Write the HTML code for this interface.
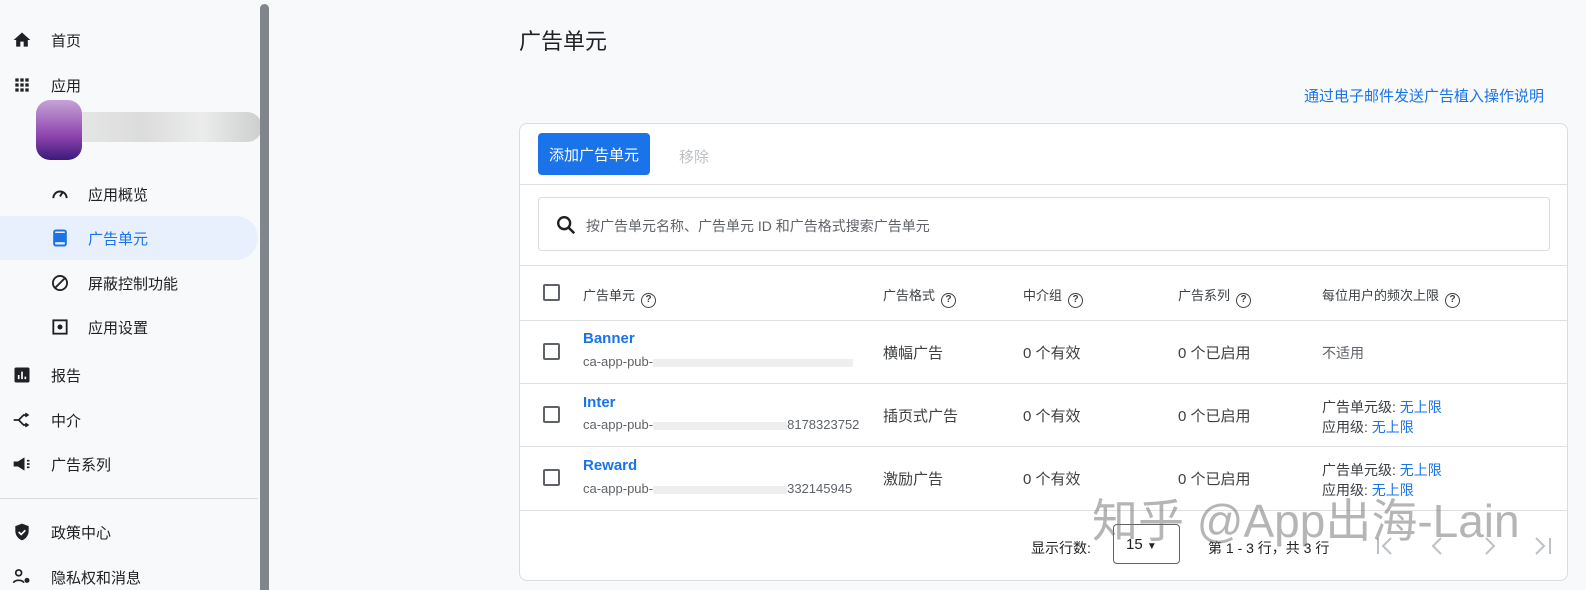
<!DOCTYPE html>
<html><head><meta charset="utf-8"><style>
*{box-sizing:border-box;margin:0;padding:0}
html,body{width:1586px;height:590px;overflow:hidden}
body{background:#f8f9fa;font-family:"Liberation Sans","Noto Sans CJK SC",sans-serif;color:#3c4043;position:relative}
.side{position:absolute;left:0;top:0;width:258px;height:590px}
.it{position:absolute;left:0;width:258px;height:44px;font-size:15px;color:#202124;white-space:nowrap}
.it .ic{position:absolute;left:12px;top:12px;width:20px;height:20px}
.it span{position:absolute;left:51px;top:12px;white-space:nowrap}
.sub .ic{left:50px}.sub span{left:88px}
.sel{background:#e8f0fe;border-radius:0 22px 22px 0;color:#1a73e8}
.scroll{position:absolute;left:260px;top:4px;width:9px;height:590px;background:#80868b;border-radius:5px}
h1{position:absolute;left:519px;top:24px;font-size:22px;font-weight:400;color:#202124}
.mail{position:absolute;left:1304px;top:85px;font-size:15px;color:#1a73e8;white-space:nowrap}
.card{position:absolute;left:519px;top:123px;width:1049px;height:458px;background:#fff;border:1px solid #dadce0;border-radius:8px}
.btn{position:absolute;left:18px;top:9px;width:112px;height:42px;background:#1a73e8;color:#fff;border-radius:4px;font-size:15px;display:flex;align-items:center;justify-content:center}
.rm{position:absolute;left:159px;top:22px;font-size:15px;color:#bdc1c6}
.hl{position:absolute;left:0;right:0;height:1px;background:#e0e0e0}
.search{position:absolute;left:18px;top:73px;width:1012px;height:54px;border:1px solid #dadce0;border-radius:4px}
.search span{position:absolute;left:47px;top:18px;font-size:14px;color:#5f6368;white-space:nowrap}
.t{position:absolute;font-size:13px;color:#3c4043;white-space:nowrap}
.c{font-size:15px;color:#3c4043}
.cb{position:absolute;left:23px;width:17px;height:17px;border:2px solid #5f6368;border-radius:2px}
.q{display:inline-block;width:15px;height:15px;border:1.6px solid #3c4043;border-radius:50%;font-size:10px;text-align:center;line-height:12px;font-weight:bold;margin-left:6px;vertical-align:-2px}
.lnk{color:#1a73e8;font-size:15px;font-weight:bold}
.b{color:#1a73e8}
.wm{position:absolute;left:1092px;top:485px;font-size:46px;color:rgba(120,120,120,.55);white-space:nowrap}
.pg{position:absolute;top:410px;font-size:24px;color:#bdc1c6}
</style></head><body>
<div class="side">
<div class="it" style="top:18px"><svg class="ic" viewBox="0 0 24 24"><path d="M10 20v-6h4v6h5v-8h3L12 3 2 12h3v8z" fill="#202124"/></svg><span>首页</span></div>
<div class="it" style="top:63px"><svg class="ic" viewBox="0 0 24 24" fill="#202124"><path d="M4 4h4v4H4zM10 4h4v4h-4zM16 4h4v4h-4zM4 10h4v4H4zM10 10h4v4h-4zM16 10h4v4h-4zM4 16h4v4H4zM10 16h4v4h-4zM16 16h4v4h-4z"/></svg><span>应用</span></div>
<div style="position:absolute;left:36px;top:100px;width:46px;height:60px;border-radius:14px;background:linear-gradient(#c5a3d8,#8e44ad 60%,#3a1a7a)"></div>
<div style="position:absolute;left:82px;top:112px;width:180px;height:30px;background:linear-gradient(90deg,#ddd,#cfcfcf,#e6e6e6,#bbb);border-radius:0 15px 15px 0;opacity:.7"></div>
<div class="it sub" style="top:172px"><svg class="ic" viewBox="0 0 24 24"><path d="M4 17a8 8 0 1116 0" fill="none" stroke="#202124" stroke-width="2.4"/><path d="M12 15l3-5" stroke="#202124" stroke-width="2.4"/></svg><span>应用概览</span></div>
<div class="it sub sel" style="top:216px"><svg class="ic" viewBox="0 0 24 24"><rect x="5" y="3" width="14" height="18" rx="2" fill="none" stroke="#1a73e8" stroke-width="2.4"/><rect x="6" y="6" width="12" height="11" fill="#1a73e8"/></svg><span>广告单元</span></div>
<div class="it sub" style="top:261px"><svg class="ic" viewBox="0 0 24 24"><circle cx="12" cy="12" r="8.5" fill="none" stroke="#202124" stroke-width="2.2"/><path d="M6 18L18 6" stroke="#202124" stroke-width="2.2"/></svg><span>屏蔽控制功能</span></div>
<div class="it sub" style="top:305px"><svg class="ic" viewBox="0 0 24 24"><rect x="4" y="4" width="16" height="16" fill="none" stroke="#202124" stroke-width="2.2"/><circle cx="12" cy="12" r="3" fill="#202124"/></svg><span>应用设置</span></div>
<div class="it" style="top:353px"><svg class="ic" viewBox="0 0 24 24"><rect x="3" y="3" width="18" height="18" rx="2" fill="#202124"/><path d="M8 17v-5M12 17V8M16 17v-3" stroke="#fff" stroke-width="2"/></svg><span>报告</span></div>
<div class="it" style="top:398px"><svg class="ic" viewBox="0 0 24 24"><path d="M2 12h6l6-6h4M8 12l6 6h4M16 4l3 2-3 2M16 16l3 2-3 2" fill="none" stroke="#202124" stroke-width="2"/></svg><span>中介</span></div>
<div class="it" style="top:442px"><svg class="ic" viewBox="0 0 24 24"><path d="M2 9h5l8-5v16l-8-5H2z" fill="#202124"/><path d="M18 8h3M18 12h3M18 16h3" stroke="#202124" stroke-width="2"/></svg><span>广告系列</span></div>
<div style="position:absolute;left:0;top:498px;width:258px;height:1px;background:#dadce0"></div>
<div class="it" style="top:510px"><svg class="ic" viewBox="0 0 24 24"><path d="M12 2l8 3v6c0 5-3.5 9.5-8 11-4.5-1.5-8-6-8-11V5z" fill="#202124"/><path d="M8 12l3 3 5-5" fill="none" stroke="#fff" stroke-width="2"/></svg><span>政策中心</span></div>
<div class="it" style="top:555px"><svg class="ic" viewBox="0 0 24 24"><circle cx="8" cy="7" r="3.5" fill="none" stroke="#202124" stroke-width="2"/><path d="M2 19c0-4 12-4 12 0" fill="none" stroke="#202124" stroke-width="2"/><circle cx="18" cy="16" r="3" fill="#202124"/></svg><span>隐私权和消息</span></div>
</div>
<div class="scroll"></div>
<h1>广告单元</h1>
<div class="mail">通过电子邮件发送广告植入操作说明</div>
<div class="card">
<div class="btn">添加广告单元</div><div class="rm">移除</div>
<div class="hl" style="top:60px"></div>
<div class="search"><svg style="position:absolute;left:16px;top:16px" width="22" height="22" viewBox="0 0 24 24"><circle cx="10" cy="10" r="6.5" fill="none" stroke="#202124" stroke-width="2.6"/><path d="M15 15l6 6" stroke="#202124" stroke-width="2.8"/></svg><span>按广告单元名称、广告单元 ID 和广告格式搜索广告单元</span></div>
<div class="hl" style="top:141px"></div>
<div class="cb" style="top:160px"></div>
<div class="t" style="left:63px;top:161px">广告单元<span class="q">?</span></div>
<div class="t" style="left:363px;top:161px">广告格式<span class="q">?</span></div>
<div class="t" style="left:503px;top:161px">中介组<span class="q">?</span></div>
<div class="t" style="left:658px;top:161px">广告系列<span class="q">?</span></div>
<div class="t" style="left:802px;top:161px">每位用户的频次上限<span class="q">?</span></div>
<div class="hl" style="top:196px"></div>
<div class="cb" style="top:219px"></div>
<div class="t lnk" style="left:63px;top:206px">Banner</div>
<div class="t" style="left:63px;top:230px;color:#5f6368">ca-app-pub-<span style="display:inline-block;width:200px;height:8px;background:#eee;vertical-align:middle"></span></div>
<div class="t c" style="left:363px;top:218px">横幅广告</div><div class="t c" style="left:503px;top:218px">0 个有效</div><div class="t c" style="left:658px;top:218px">0 个已启用</div><div class="t" style="left:802px;top:219px;font-size:14px;color:#5f6368">不适用</div>
<div class="hl" style="top:259px"></div>
<div class="cb" style="top:282px"></div>
<div class="t lnk" style="left:63px;top:270px">Inter</div>
<div class="t" style="left:63px;top:293px;color:#5f6368">ca-app-pub-<span style="display:inline-block;width:134px;height:8px;background:#eee;vertical-align:middle"></span>8178323752</div>
<div class="t c" style="left:363px;top:281px">插页式广告</div><div class="t c" style="left:503px;top:281px">0 个有效</div><div class="t c" style="left:658px;top:281px">0 个已启用</div>
<div class="t" style="left:802px;top:273px;font-size:14px">广告单元级: <span class="b">无上限</span><br>应用级: <span class="b">无上限</span></div>
<div class="hl" style="top:322px"></div>
<div class="cb" style="top:345px"></div>
<div class="t lnk" style="left:63px;top:333px">Reward</div>
<div class="t" style="left:63px;top:357px;color:#5f6368">ca-app-pub-<span style="display:inline-block;width:134px;height:8px;background:#eee;vertical-align:middle"></span>332145945</div>
<div class="t c" style="left:363px;top:344px">激励广告</div><div class="t c" style="left:503px;top:344px">0 个有效</div><div class="t c" style="left:658px;top:344px">0 个已启用</div>
<div class="t" style="left:802px;top:336px;font-size:14px">广告单元级: <span class="b">无上限</span><br>应用级: <span class="b">无上限</span></div>
<div class="hl" style="top:386px"></div>
<div class="t" style="left:511px;top:414px;font-size:14px;color:#202124">显示行数:</div>
<div style="position:absolute;left:593px;top:400px;width:67px;height:40px;border:1px solid #5f6368;border-radius:4px;font-size:15px;padding:11px 0 0 12px;color:#202124;white-space:nowrap">15 <span style="font-size:10px">▼</span></div>
<div class="t" style="left:688px;top:414px;font-size:14px;color:#202124">第 1 - 3 行，共 3 行</div>
<svg style="position:absolute;left:855px;top:410px" width="180" height="24" viewBox="0 0 180 24" fill="none" stroke="#bdc1c6" stroke-width="2"><path d="M3 4v16M16 4l-8 8 8 8M66 4l-8 8 8 8M111 4l8 8-8 8M161 4l8 8-8 8M175 4v16"/></svg>
</div>
<div class="wm">知乎 @App出海-Lain</div>
</body></html>
